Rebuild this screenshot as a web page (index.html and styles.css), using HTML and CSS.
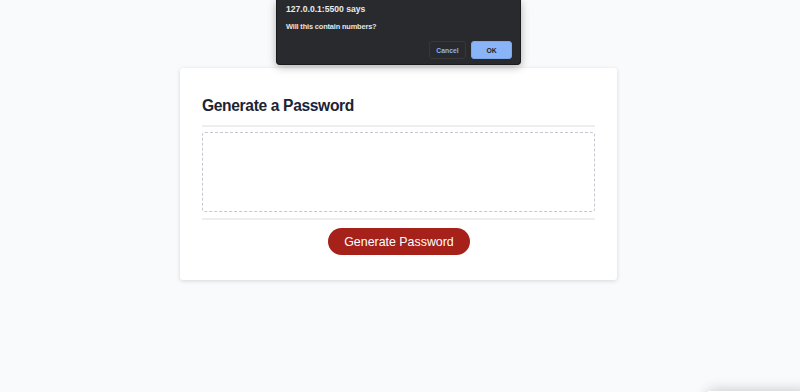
FILE: index.html
```html
<!DOCTYPE html>
<html lang="en">
<head>
<meta charset="UTF-8">
<title>Password Generator</title>
<link rel="stylesheet" href="styles.css">
</head>
<body>
  <div class="wrapper">
    <div class="card">
      <div class="card-header">
        <h2>Generate a Password</h2>
      </div>
      <div class="card-body">
        <textarea readonly id="password" aria-label="Generated Password"></textarea>
      </div>
      <div class="card-footer">
        <button id="generate" class="btn">Generate Password</button>
      </div>
    </div>
  </div>

  <div class="dialog">
    <div class="dialog-title">127.0.0.1:5500 says</div>
    <div class="dialog-msg">Will this contain numbers?</div>
    <div class="dialog-actions">
      <button class="dbtn cancel">Cancel</button>
      <button class="dbtn ok">OK</button>
    </div>
  </div>

  <div class="corner-popup"></div>
</body>
</html>
```
FILE: styles.css
```css
* { box-sizing: border-box; }
html, body { margin: 0; padding: 0; }
body {
  background: #f9fafb;
  font-family: "Liberation Sans", Arial, sans-serif;
  height: 392px;
  overflow: hidden;
}
.wrapper {
  padding-top: 68px;
}
.card {
  width: 437px;
  margin-left: 180px;
  background: #fff;
  border-radius: 3px;
  box-shadow: 0 1px 4px rgba(0, 0, 0, 0.14);
  padding: 0 22px 25px;
}
.card-header {
  padding: 27px 0 9px;
  border-bottom: 2px solid #eceef0;
}
.card-header h2 {
  margin: 0;
  font-size: 15.6px;
  line-height: 21px;
  font-weight: 700;
  color: #1c2333;
  letter-spacing: -0.35px;
}
.card-body {
  padding: 5px 0 6px;
}
.card-body textarea {
  display: block;
  width: 100%;
  height: 80px;
  border: 1px dashed #c4c8d0;
  border-radius: 3px;
  resize: none;
  background: #fff;
  margin: 0;
  padding: 0;
}
.card-footer {
  border-top: 2px solid #eceef0;
  padding-top: 8px;
  display: flex;
  justify-content: center;
}
.btn {
  width: 142px;
  height: 27px;
  border: none;
  border-radius: 14px;
  background: #a5211a;
  color: #fff;
  font-family: "Liberation Sans", Arial, sans-serif;
  font-size: 12.4px;
  padding: 0;
  margin-left: 1px;
}

.dialog {
  position: absolute;
  top: 0;
  left: 276px;
  width: 245px;
  height: 65px;
  background: #292a2d;
  border: 1px solid #1b1b1d;
  border-top: none;
  border-radius: 0 0 4px 4px;
  box-shadow: 0 2px 8px rgba(0, 0, 0, 0.3);
  padding: 4px 0 0 9px;
  color: #e8eaed;
}
.dialog-title {
  font-size: 8.6px;
  font-weight: 700;
  line-height: 11px;
}
.dialog-msg {
  margin-top: 7px;
  font-size: 7.4px;
  font-weight: 700;
  line-height: 9px;
  letter-spacing: -0.15px;
  color: #e3e5e8;
}
.dialog-actions {
  display: flex;
  justify-content: flex-end;
  gap: 5px;
  padding-right: 8px;
  margin-top: 10px;
}
.dbtn {
  height: 18px;
  border-radius: 3px;
  font-family: "Liberation Sans", Arial, sans-serif;
  font-size: 6.8px;
  font-weight: 700;
  padding: 0;
}
.cancel {
  width: 37px;
  background: #292a2d;
  border: 1px solid #36373a;
  color: #8ab4f8;
}
.ok {
  width: 41px;
  background: #8ab4f8;
  border: 1px solid #7ea7ea;
  color: #202124;
}
.corner-popup {
  position: absolute;
  left: 708px;
  top: 391px;
  width: 100px;
  height: 20px;
  background: #fff;
  box-shadow: 0 0 14px rgba(0, 0, 0, 0.22);
}
```
